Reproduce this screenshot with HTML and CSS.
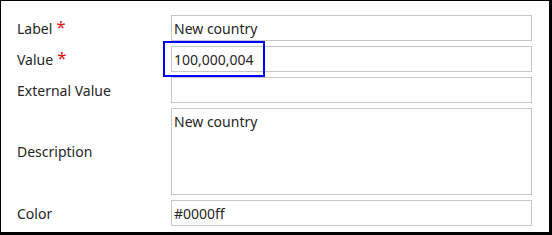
FILE: index.html
```html
<!DOCTYPE html>
<html>
<head>
<meta charset="utf-8">
<link rel="stylesheet" href="styles.css">
</head>
<body>
<div class="frame">
  <form class="form">
    <label class="lbl">Label<span class="req">*</span></label>
    <div class="cell"><input class="field" type="text" value="New country"></div>

    <label class="lbl">Value<span class="req">*</span></label>
    <div class="cell">
      <input class="field" type="text" value="100,000,004">
      <div class="focus-ring"></div>
    </div>

    <label class="lbl">External Value</label>
    <div class="cell"><input class="field" type="text" value=""></div>

    <label class="lbl">Description</label>
    <div class="cell"><textarea class="field area">New country</textarea></div>

    <label class="lbl">Color</label>
    <div class="cell"><input class="field" type="text" value="#0000ff"></div>
  </form>
</div>
</body>
</html>
```

FILE: styles.css
```css
html, body {
  margin: 0;
  padding: 0;
  background: #ffffff;
}

.frame {
  box-sizing: border-box;
  width: 552px;
  height: 235px;
  border-style: solid;
  border-color: #000000;
  border-width: 1px 3px 3px 1px;
  background: #ffffff;
  padding: 14px 17px 6px 15px;
  font-family: "Noto Sans", "Open Sans", sans-serif;
  font-size: 14px;
  color: #262626;
}

.form {
  display: grid;
  grid-template-columns: 155px 361px;
  grid-template-rows: 26px 26px 26px 87px 26px;
  row-gap: 5px;
  margin: 0;
}

.lbl {
  display: flex;
  align-items: center;
  padding-left: 1px;
  white-space: nowrap;
}

.req {
  color: #e01010;
  font-size: 17px;
  line-height: 1;
  margin-left: 4px;
  align-self: center;
  position: relative;
  top: -2px;
}

.cell {
  position: relative;
}

.field {
  box-sizing: border-box;
  display: block;
  width: 100%;
  height: 100%;
  margin: 0;
  padding: 0 2px;
  border: 1px solid #c6c6c6;
  background: #ffffff;
  font-family: inherit;
  font-size: 14px;
  color: #262626;
  outline: none;
}

.area {
  resize: none;
  padding: 3px 2px;
  overflow: hidden;
  line-height: 19px;
}

.focus-ring {
  position: absolute;
  left: -8px;
  top: -5px;
  width: 102px;
  height: 36px;
  box-sizing: border-box;
  border: 2px solid #0000ff;
  pointer-events: none;
}
```
